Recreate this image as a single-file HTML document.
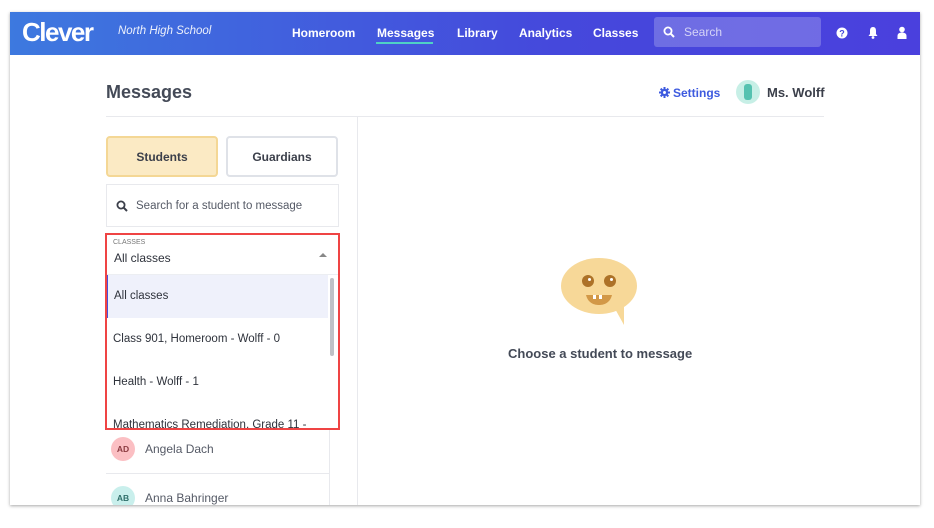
<!DOCTYPE html>
<html><head><style>
*{box-sizing:border-box;margin:0;padding:0}
body{width:934px;height:528px;background:#fff;font-family:"Liberation Sans",sans-serif;position:relative;overflow:hidden;color:#3b3f4a}
.frame{position:absolute;left:10px;top:12px;width:910px;height:493px;background:#fff;box-shadow:0 1px 3px rgba(0,0,0,.35);overflow:hidden}
.nav{position:absolute;left:0;top:0;width:910px;height:43px;background:linear-gradient(90deg,#3d79df,#4548dc 60%,#4a40dd);color:#fff}
.abs{position:absolute}
.nav .l{position:absolute;top:14px;font-size:12px;font-weight:bold}
.sbox{position:absolute;left:644px;top:5px;width:167px;height:30px;background:rgba(255,255,255,.22);border-radius:3px}
.btn{position:absolute;top:124px;width:112px;height:41px;border-radius:4px;font-size:12px;font-weight:bold;text-align:center;line-height:39px}
.item{position:absolute;left:0;width:223px;height:43px;font-size:11.5px;line-height:43px;padding-left:8px;color:#2e323b}
</style></head><body>
<div class="frame">
<div class="nav">
<div class="abs" style="left:12px;top:5px;font-size:26px;font-weight:bold;letter-spacing:-1.5px">Clever</div>
<div class="abs" style="left:108px;top:13px;font-size:11.5px;font-style:italic;opacity:.9">North High School</div>
<div class="l" style="left:282px">Homeroom</div>
<div class="l" style="left:367px">Messages</div>
<div class="abs" style="left:366px;top:30px;width:57px;height:2px;background:#4fd1c5"></div>
<div class="l" style="left:447px">Library</div>
<div class="l" style="left:509px">Analytics</div>
<div class="l" style="left:583px">Classes</div>
<div class="sbox"><svg class="abs" style="left:9px;top:9px" width="12" height="12" viewBox="0 0 12 12"><circle cx="5" cy="5" r="3.6" stroke="#fff" stroke-width="1.8" fill="none"/><path d="M7.6 7.6L11 11" stroke="#fff" stroke-width="2"/></svg><span class="abs" style="left:30px;top:8px;font-size:12px;color:rgba(255,255,255,.7)">Search</span></div>
<svg class="abs" style="left:826px;top:15px" width="12" height="12"><circle cx="6" cy="6" r="5.5" fill="#fff"/><text x="6" y="9.5" font-size="9" font-weight="bold" text-anchor="middle" fill="#4548dc" font-family="Liberation Sans">?</text></svg>
<svg class="abs" style="left:857px;top:14px" width="12" height="13"><path d="M6 1C3.5 1 3 3 3 5v3L1.5 10h9L9 8V5C9 3 8.5 1 6 1z" fill="#fff"/><circle cx="6" cy="11.5" r="1.4" fill="#fff"/></svg>
<svg class="abs" style="left:887px;top:14px" width="10" height="13"><circle cx="5" cy="3.5" r="2.8" fill="#fff"/><path d="M0.5 13V10c0-2.5 2-3.5 4.5-3.5S9.5 7.5 9.5 10v3z" fill="#fff"/></svg>
</div>
<div class="abs" style="left:96px;top:70px;font-size:18px;font-weight:bold;color:#444a57">Messages</div>
<svg class="abs" style="left:649px;top:75px" width="11" height="11" viewBox="0 0 12 12"><circle cx="6" cy="6" r="4" fill="#3d5adf"/><path d="M6 0v12M0 6h12M1.8 1.8l8.4 8.4M10.2 1.8l-8.4 8.4" stroke="#3d5adf" stroke-width="2.2"/><circle cx="6" cy="6" r="1.6" fill="#fff"/></svg>
<div class="abs" style="left:663px;top:74px;font-size:12px;font-weight:bold;color:#3d5adf">Settings</div>
<div class="abs" style="left:726px;top:68px;width:24px;height:24px;border-radius:50%;background:#c7efe6"></div>
<div class="abs" style="left:734px;top:72px;width:8px;height:16px;border-radius:3px;background:#55c2b0"></div>
<div class="abs" style="left:757px;top:73px;font-size:13px;font-weight:bold;color:#3b3f4a">Ms. Wolff</div>
<div class="abs" style="left:96px;top:104px;width:718px;height:1px;background:#e8e9ed"></div>
<div class="abs" style="left:347px;top:104px;width:1px;height:400px;background:#e8e9ed"></div>
<div class="btn" style="left:96px;background:#fbeac4;border:2px solid #f4d795;color:#3b3f4a">Students</div>
<div class="btn" style="left:216px;background:#fff;border:2px solid #dfe2e8;color:#3b3f4a">Guardians</div>
<div class="abs" style="left:96px;top:172px;width:233px;height:43px;border:1px solid #e8e9ed"></div>
<svg class="abs" style="left:106px;top:188px" width="12" height="12" viewBox="0 0 12 12"><circle cx="5" cy="5" r="3.6" stroke="#3b3f4a" stroke-width="1.8" fill="none"/><path d="M7.6 7.6L11 11" stroke="#3b3f4a" stroke-width="2"/></svg>
<div class="abs" style="left:126px;top:188px;font-size:11.5px;color:#555a66">Search for a student to message</div>
<div class="abs" style="left:96px;top:405px;width:224px;height:90px;border-right:1px solid #e8e9ed"></div>
<div class="abs" style="left:101px;top:425px;width:24px;height:24px;border-radius:50%;background:#fbbfc3;font-size:8.5px;font-weight:bold;line-height:24px;text-align:center;color:#8a3a40">AD</div>
<div class="abs" style="left:135px;top:430px;font-size:12px;color:#555a66">Angela Dach</div>
<div class="abs" style="left:96px;top:461px;width:224px;height:1px;background:#e8e9ed"></div>
<div class="abs" style="left:101px;top:474px;width:24px;height:24px;border-radius:50%;background:#c9efec;font-size:8.5px;font-weight:bold;line-height:24px;text-align:center;color:#2f6f6a">AB</div>
<div class="abs" style="left:135px;top:479px;font-size:12px;color:#555a66">Anna Bahringer</div>
<div class="abs" style="left:95px;top:221px;width:235px;height:197px;background:#fff;overflow:hidden">
<div class="abs" style="left:8px;top:6px;font-size:7px;color:#777">CLASSES</div>
<div class="abs" style="left:9px;top:18px;font-size:12px;color:#2e323b">All classes</div>
<div class="abs" style="left:214px;top:20px;width:0;height:0;border-left:4px solid transparent;border-right:4px solid transparent;border-bottom:4px solid #888"></div>
<div class="abs" style="left:0;top:41px;width:233px;height:1px;background:#eceef2"></div>
<div class="item" style="top:42px;background:#eff1fb;border-left:3px solid #4a50d8;padding-left:6px">All classes</div>
<div class="item" style="top:85px">Class 901, Homeroom - Wolff - 0</div>
<div class="item" style="top:128px">Health - Wolff - 1</div>
<div class="item" style="top:171px">Mathematics Remediation, Grade 11 -</div>
<div class="abs" style="left:225px;top:45px;width:4px;height:78px;border-radius:2px;background:#bfc1c6"></div>
</div>
<div class="abs" style="left:95px;top:221px;width:235px;height:197px;border:2px solid #ef4444"></div>
<svg class="abs" style="left:550px;top:245px" width="80" height="70" viewBox="0 0 80 70">
<ellipse cx="39" cy="29" rx="38" ry="28" fill="#f7d898"/>
<path d="M54 50L64 68L64 48z" fill="#f7d898"/>
<circle cx="28" cy="24" r="6" fill="#ad7228"/><circle cx="29.5" cy="22.5" r="1.5" fill="#fff"/>
<circle cx="50" cy="24" r="6" fill="#ad7228"/><circle cx="51.5" cy="22.5" r="1.5" fill="#fff"/>
<path d="M26 38h26c-2 8-8 10-13 10s-11-2-13-10z" fill="#d29847"/>
<rect x="33" y="38" width="3" height="4" fill="#fff"/><rect x="39" y="38" width="3" height="4" fill="#fff"/>
</svg>
<div class="abs" style="left:498px;top:334px;font-size:13px;font-weight:bold;color:#444a57">Choose a student to message</div>
</div>
</body></html>
